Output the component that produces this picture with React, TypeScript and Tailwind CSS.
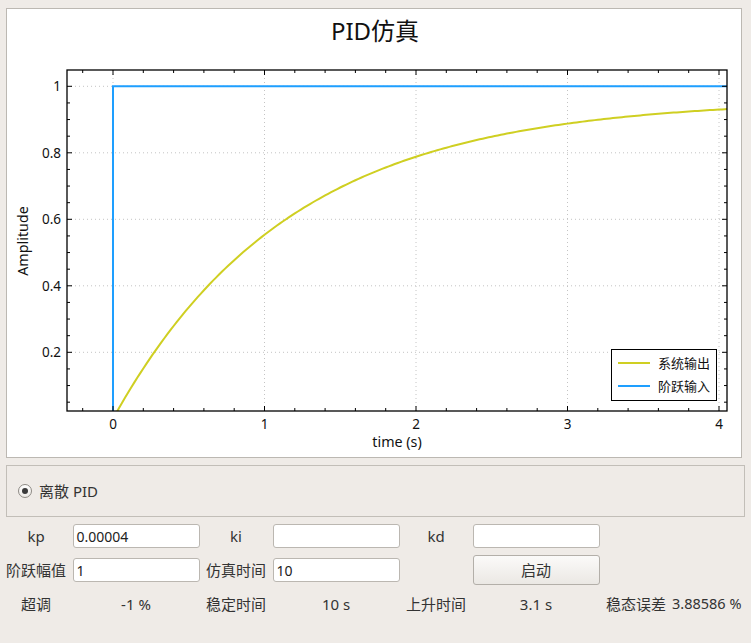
import React from 'react';

const FONT = "'Noto Sans', 'Noto Sans CJK SC', sans-serif";

// plot geometry, in page pixels
const PL = 67, PR = 727, PT = 70, PB = 411;
const X = (t: number) => 113 + t * 151.5;
const Y = (v: number) => 86.3 + (1 - v) * 332.5;

const outputPath = () => {
  const pts: string[] = [];
  for (let t = 0; t <= 4.1; t += 0.02) {
    const v = 0.9611 * (1 - Math.exp(-t / 1.166));
    pts.push(`${X(t).toFixed(2)},${Y(v).toFixed(2)}`);
  }
  return 'M' + pts.join(' L');
};

const Chart: React.FC = () => {
  const xMajor = [0, 1, 2, 3, 4];
  const xMinor: number[] = [];
  for (let i = -1; i <= 20; i++) xMinor.push(i * 0.2);
  const yMajor = [0.2, 0.4, 0.6, 0.8, 1];
  const yMinor: number[] = [];
  for (let i = 1; i <= 20; i++) yMinor.push(i * 0.05);

  return (
    <svg width={734} height={448} viewBox="7 9 734 448" style={{ fontFamily: FONT }}>
      <defs>
        <clipPath id="plot">
          <rect x={PL} y={PT} width={PR - PL} height={PB - PT} />
        </clipPath>
      </defs>

      <text x={375} y={39.5} textAnchor="middle" fontSize={24} fill="#111">PID仿真</text>

      {/* grid */}
      {xMajor.map((t) => (
        <line key={'gx' + t} x1={X(t)} x2={X(t)} y1={PT} y2={PB} stroke="#c4c4c4" strokeDasharray="1 3" />
      ))}
      {yMajor.map((v) => (
        <line key={'gy' + v} x1={PL} x2={PR} y1={Y(v)} y2={Y(v)} stroke="#c4c4c4" strokeDasharray="1 3" />
      ))}

      {/* curves */}
      <g clipPath="url(#plot)">
        <path d={outputPath()} fill="none" stroke="#cfcf22" strokeWidth={2} />
        <path d={`M${X(0)},${PB + 2} L${X(0)},${Y(1)} L${PR + 2},${Y(1)}`} fill="none" stroke="#1e9fff" strokeWidth={2} />
      </g>

      {/* axes box */}
      <rect x={PL} y={PT} width={PR - PL} height={PB - PT} fill="none" stroke="#000" strokeWidth={1.3} />

      {/* ticks */}
      {xMinor.map((t, i) => {
        const x = X(t);
        if (x <= PL || x >= PR) return null;
        const major = Math.abs(t - Math.round(t)) < 1e-6;
        const len = major ? 5 : 3;
        return (
          <g key={'tx' + i}>
            <line x1={x} x2={x} y1={PB} y2={PB - len} stroke="#000" />
            <line x1={x} x2={x} y1={PT} y2={PT + len} stroke="#000" />
          </g>
        );
      })}
      {yMinor.map((v, i) => {
        const y = Y(v);
        if (y <= PT || y >= PB) return null;
        const major = i % 4 === 3;
        const len = major ? 5 : 3;
        return (
          <g key={'ty' + i}>
            <line x1={PL} x2={PL + len} y1={y} y2={y} stroke="#000" />
            <line x1={PR} x2={PR - len} y1={y} y2={y} stroke="#000" />
          </g>
        );
      })}

      {/* tick labels */}
      {yMajor.map((v) => (
        <text key={'ly' + v} x={61} y={Y(v) + 4.8} textAnchor="end" fontSize={13.5} fill="#111">
          {v === 1 ? '1' : v.toFixed(1)}
        </text>
      ))}
      {xMajor.map((t) => (
        <text key={'lx' + t} x={X(t)} y={428.5} textAnchor="middle" fontSize={13.5} fill="#111">
          {t}
        </text>
      ))}

      <text x={397} y={446.5} textAnchor="middle" fontSize={14.3} fill="#111">time (s)</text>
      <text x={0} y={0} transform={`translate(28 ${241}) rotate(-90)`} textAnchor="middle" fontSize={14.3} fill="#111">
        Amplitude
      </text>

      {/* legend */}
      <rect x={611.5} y={349.5} width={105} height={51} fill="#fff" stroke="#000" />
      <line x1={618} x2={650} y1={363} y2={363} stroke="#cfcf22" strokeWidth={2} />
      <line x1={618} x2={650} y1={386} y2={386} stroke="#1e9fff" strokeWidth={2} />
      <text x={658} y={367.5} fontSize={13} fill="#111">系统输出</text>
      <text x={658} y={390.5} fontSize={13} fill="#111">阶跃输入</text>
    </svg>
  );
};

const Field: React.FC<{ value?: string }> = ({ value = '' }) => (
  <div className="h-[24px] bg-white border border-[#bbb7b1] rounded-[3px] flex items-center px-[3px] text-[14px] text-[#222]">
    {value}
  </div>
);

const Label: React.FC<{ children: React.ReactNode; className?: string }> = ({ children, className = '' }) => (
  <div className={`flex items-center justify-center text-[15px] text-[#333] whitespace-nowrap ${className}`}>{children}</div>
);

export default function App() {
  return (
    <div className="w-[751px] h-[643px] bg-[#efebe7] overflow-hidden pt-[8px] px-[6px]" style={{ fontFamily: FONT }}>
      <div className="w-[736px] h-[450px] bg-white border border-[#bcb8b2]">
        <Chart />
      </div>

      <div className="mt-[7px] h-[52px] border border-[#c2beb8] flex items-center pl-[11px]">
        <div className="w-[14px] h-[14px] rounded-full border border-[#8e8a85] bg-gradient-to-b from-white to-[#ece9e5] flex items-center justify-center">
          <div className="w-[6px] h-[6px] rounded-full bg-[#3a3a3a]" />
        </div>
        <span className="ml-[7px] text-[15px] text-[#333]">离散 PID</span>
      </div>

      <div className="mt-[4px] grid grid-cols-[60px_127px_60px_127px_60px_127px_1fr] grid-rows-[30px_30px_30px] gap-x-[6.5px] gap-y-[4px]">
        <Label className="text-[15px]">kp</Label>
        <div className="flex items-center"><div className="w-full"><Field value="0.00004" /></div></div>
        <Label>ki</Label>
        <div className="flex items-center"><div className="w-full"><Field /></div></div>
        <Label>kd</Label>
        <div className="flex items-center"><div className="w-full"><Field /></div></div>
        <div />

        <Label>阶跃幅值</Label>
        <div className="flex items-center"><div className="w-full"><Field value="1" /></div></div>
        <Label>仿真时间</Label>
        <div className="flex items-center"><div className="w-full"><Field value="10" /></div></div>
        <div />
        <button className="h-[30px] rounded-[3px] border border-[#b3afa9] bg-gradient-to-b from-[#fbfaf9] to-[#ebe8e4] text-[15px] text-[#333]">
          启动
        </button>
        <div />

        <Label>超调</Label>
        <Label className="text-[14px]">-1 %</Label>
        <Label>稳定时间</Label>
        <Label className="text-[14px]">10 s</Label>
        <Label>上升时间</Label>
        <Label className="text-[14px]">3.1 s</Label>
        <div className="flex items-center text-[15px] text-[#333] whitespace-nowrap">
          稳态误差<span className="ml-[6px] text-[14.5px]">3.88586 %</span>
        </div>
      </div>
    </div>
  );
}
